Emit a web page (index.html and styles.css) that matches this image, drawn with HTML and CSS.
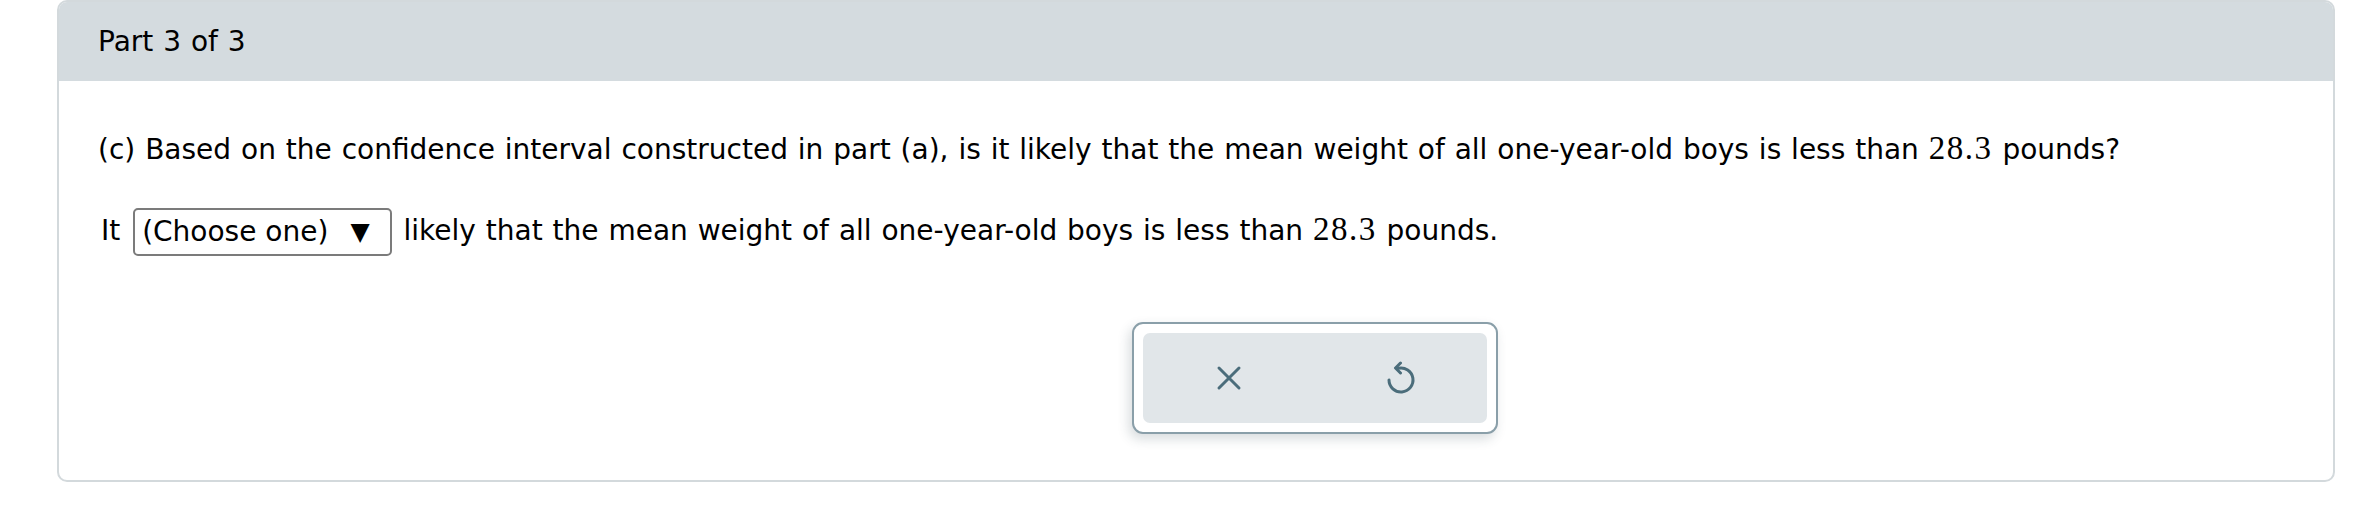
FILE: index.html
```html
<!DOCTYPE html>
<html>
<head>
<meta charset="utf-8">
<link rel="stylesheet" href="styles.css">
</head>
<body>
<div class="page">
  <div class="card">
    <div class="card-header">Part 3 of 3</div>
    <div class="card-body">
      <p class="question">(c) Based on the confidence interval constructed in part (a), is it likely that the mean weight of all one-year-old boys is less than <span class="num">28.3</span> pounds?</p>
      <div class="answer">
        <p class="answer-line">It <span class="select"><span class="select-text">(Choose one)</span><span class="caret">▼</span></span> likely that the mean weight of all one-year-old boys is less than <span class="num">28.3</span> pounds.</p>
        <div class="actions">
          <div class="actions-inner">
            <button class="action" aria-label="Clear">
              <svg width="26" height="26" viewBox="0 0 26 26"><path d="M3 3 L23 23 M23 3 L3 23" stroke="#4b6d7b" stroke-width="3" stroke-linecap="round" fill="none"/></svg>
            </button>
            <button class="action" aria-label="Undo">
              <svg width="32" height="34" viewBox="0 0 32 34"><path d="M13.2 7.3 A12 12 0 1 1 4 19" stroke="#4b6d7b" stroke-width="3" stroke-linecap="round" fill="none"/><path d="M15.5 2 L10.5 7 L15.5 12" stroke="#4b6d7b" stroke-width="3" stroke-linecap="round" stroke-linejoin="round" fill="none"/></svg>
            </button>
          </div>
        </div>
      </div>
    </div>
  </div>
</div>
</body>
</html>
```

FILE: styles.css
```css
html, body {
  margin: 0;
  padding: 0;
  background: #ffffff;
}
body {
  width: 2368px;
  height: 510px;
  overflow: hidden;
  font-family: "DejaVu Sans", Verdana, sans-serif;
  color: #000;
  word-spacing: 1px;
}
.page {
  padding-left: 57px;
  width: 2278px;
}
.card {
  border: 2px solid #d3d9dc;
  border-radius: 10px;
  box-sizing: border-box;
  height: 482px;
  overflow: hidden;
}
.card-header {
  background: #d4dbdf;
  height: 79px;
  display: flex;
  align-items: center;
  padding-left: 39px;
  font-size: 28px;
}
.card-body {
  padding: 47px 39px 0;
  font-size: 28px;
}
.question {
  margin: 0;
  line-height: 40px;
}
.num {
  font-family: "Liberation Serif", "Times New Roman", serif;
  font-size: 33px;
  letter-spacing: 1.5px;
}
.answer {
  display: inline-flex;
  flex-direction: column;
  align-items: flex-end;
  margin-top: 38px;
  padding-left: 3px;
}
.answer-line {
  margin: 0;
  line-height: 40px;
}
.select {
  display: inline-flex;
  align-items: center;
  vertical-align: middle;
  height: 48px;
  box-sizing: border-box;
  border: 2px solid #7b7b7b;
  border-radius: 5px;
  padding: 0 20px 0 7px;
  margin: 0 2px 0 3px;
  word-spacing: 0;
}
.select-text {
  margin-right: 22px;
}
.caret {
  font-size: 25px;
}
.actions {
  margin-top: 66px;
  width: 366px;
  height: 112px;
  box-sizing: border-box;
  border: 2px solid #8a9fa9;
  border-radius: 11px;
  padding: 9px;
  background: #fff;
  box-shadow: -3px 5px 12px rgba(40, 60, 70, 0.18);
}
.actions-inner {
  display: flex;
  height: 100%;
  background: #e1e6e9;
  border-radius: 7px;
}
.action {
  flex: 1;
  border: 0;
  background: transparent;
  display: flex;
  align-items: center;
  justify-content: center;
  padding: 0;
  cursor: pointer;
}
```
